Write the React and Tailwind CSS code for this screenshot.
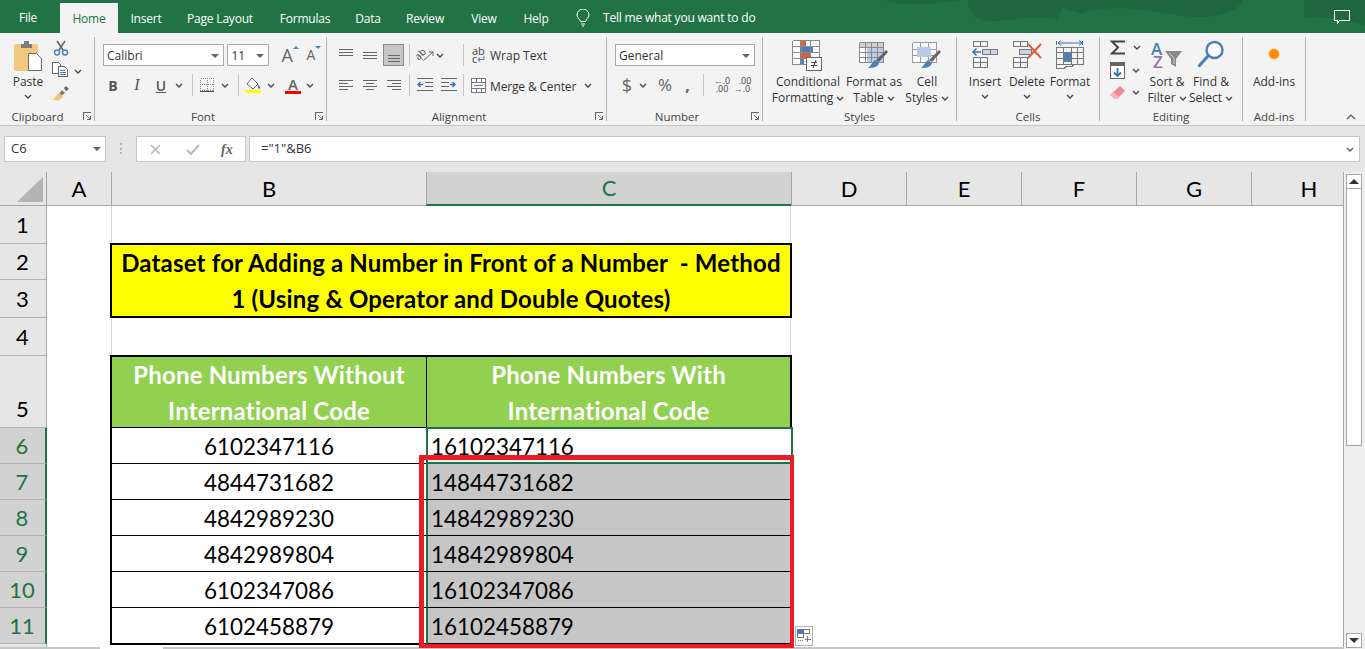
import { Fragment } from 'react'

const tabs = [
  { name: 'File', cls: 'w-[56px]', text: 'top-[1px]' },
  { name: 'Home', cls: 'w-[58px] ml-[4px] mt-[3px] h-[30px] bg-[#f3f3f3] text-[#217346]', text: '-top-[1px]' },
  { name: 'Insert', cls: 'w-[56px]', text: 'top-[2px]' },
  { name: 'Page Layout', cls: 'w-[92px]', text: 'top-[2px]' },
  { name: 'Formulas', cls: 'w-[78px]', text: 'top-[2px]' },
  { name: 'Data', cls: 'w-[48px]', text: 'top-[2px]' },
  { name: 'Review', cls: 'w-[66px]', text: 'top-[2px]' },
  { name: 'View', cls: 'w-[52px]', text: 'top-[2px]' },
  { name: 'Help', cls: 'w-[52px]', text: 'top-[2px]' },
]

const columns = [
  { name: 'A', cls: 'col-start-2' },
  { name: 'B', cls: 'col-start-3 border-l' },
  { name: 'C', cls: 'col-start-4 border-l', active: true },
  { name: 'D', cls: 'col-start-5 border-l' },
  { name: 'E', cls: 'col-start-6 border-l' },
  { name: 'F', cls: 'col-start-7 border-l' },
  { name: 'G', cls: 'col-start-8 border-l' },
  { name: 'H', cls: 'col-start-9 border-l pl-[23px]' },
]

const rowHeaders = [
  { n: '1', cls: 'row-start-2' },
  { n: '2', cls: 'row-start-3' },
  { n: '3', cls: 'row-start-4' },
  { n: '4', cls: 'row-start-5' },
  { n: '5', cls: 'row-start-6 items-end' },
  { n: '6', cls: 'row-start-7', active: true },
  { n: '7', cls: 'row-start-8', active: true },
  { n: '8', cls: 'row-start-9', active: true },
  { n: '9', cls: 'row-start-10', active: true },
  { n: '10', cls: 'row-start-11', active: true },
  { n: '11', cls: 'row-start-12', active: true },
]

const phones = [
  { row: 'row-start-8', b: '4844731682', c: '14844731682' },
  { row: 'row-start-9', b: '4842989230', c: '14842989230' },
  { row: 'row-start-10', b: '4842989804', c: '14842989804' },
  { row: 'row-start-11', b: '6102347086', c: '16102347086' },
  { row: 'row-start-12 border-b-2 -mb-px', b: '6102458879', c: '16102458879' },
]

function Chev({ className = '' }) {
  return (
    <svg className={`shrink-0 ${className}`} width="8" height="5" viewBox="0 0 8 5" fill="none" stroke="#444" strokeWidth="1.3">
      <path d="M1 1l3 3 3-3" />
    </svg>
  )
}

function Launcher() {
  return (
    <svg className="absolute right-[2px] bottom-[0px]" width="9" height="9" viewBox="0 0 9 9" fill="none" stroke="#666" shapeRendering="crispEdges">
      <path d="M0.5 8V0.5H8" />
      <path d="M3 3l4 4M7.5 4v3.5H4" shapeRendering="auto" />
    </svg>
  )
}

function Group({ label, className, labelClass = '', children, launcher }) {
  return (
    <div className={`relative flex h-[84px] shrink-0 flex-col border-r border-[#b1b1b1] ${className}`}>
      <div className="h-[73px] shrink-0">{children}</div>
      <div className={`shrink-0 text-center text-[11.5px] leading-[14px] text-[#444] ${labelClass}`}>{label}</div>
      {launcher && <Launcher />}
    </div>
  )
}

function Lines({ rows }) {
  return (
    <svg width="16" height="14" viewBox="0 0 16 14" stroke="#666" shapeRendering="crispEdges">
      {rows.map(([x1, x2, y]) => <line key={y} x1={x1} x2={x2} y1={y} y2={y} />)}
    </svg>
  )
}

function ComboArrow() {
  return <span className="ml-auto mr-[4px] h-0 w-0 border-x-[4px] border-t-[4px] border-x-transparent border-t-[#666]" />
}

function BigButton({ className, icon, lines, chev }) {
  return (
    <div className={`flex shrink-0 flex-col items-center pt-[3px] text-[12px] leading-[16px] text-[#333] ${className}`}>
      <div className="flex h-[34px] items-start">{icon}</div>
      {lines.map((l, i) => (
        <div key={l} className="flex items-center gap-[3px] whitespace-nowrap">
          {l}
          {chev && i === lines.length - 1 && <Chev />}
        </div>
      ))}
    </div>
  )
}

function GridLines({ x, y, w, h, cols, rows, color = '#8a8a8a' }) {
  const v = []
  const hz = []
  for (let i = 0; i <= cols; i++) v.push(x + (w * i) / cols)
  for (let i = 0; i <= rows; i++) hz.push(y + (h * i) / rows)
  return (
    <g stroke={color} shapeRendering="crispEdges">
      {v.map((a) => <line key={`v${a}`} x1={a} x2={a} y1={y} y2={y + h} />)}
      {hz.map((a) => <line key={`h${a}`} x1={x} x2={x + w} y1={a} y2={a} />)}
    </g>
  )
}

function Brush() {
  return (
    <g>
      <path d="M28 10l2 2-9 10-3-2z" fill="#666" />
      <path d="M17 20l4 3c-1 4-5 5-11 5 3-2 4-6 7-8z" fill="#4a7fba" />
    </g>
  )
}

const icons = {
  paste: (
    <svg width="30" height="32" viewBox="0 0 30 32">
      <rect x="1" y="4" width="24" height="27" rx="2" fill="#f0c97e" />
      <path d="M8 4h3V1h5v3h3v4H8z" fill="#7d7d7d" />
      <path d="M15.500 13.500h8l5 5v12h-13z" fill="#fff" stroke="#6b6b6b" />
    </svg>
  ),
  cut: (
    <svg width="16" height="16" viewBox="0 0 16 16" fill="none">
      <path d="M4 1l6 9M12 1L6 10" stroke="#666" strokeWidth="1.6" />
      <circle cx="4" cy="12.500" r="2.500" stroke="#4a7fba" strokeWidth="1.4" />
      <circle cx="12" cy="12.500" r="2.500" stroke="#4a7fba" strokeWidth="1.4" />
    </svg>
  ),
  copy: (
    <svg width="16" height="15" viewBox="0 0 16 15" fill="#fff" stroke="#666" shapeRendering="crispEdges">
      <path d="M0.500 0.500h6l2 2v9h-8z" />
      <path d="M6.500 4.500h6l3 3v7h-9z" />
      <path d="M8 8.500h5M8 10.500h6M8 12.500h6" stroke="#4a7fba" />
    </svg>
  ),
  painter: (
    <svg width="17" height="15" viewBox="0 0 17 15">
      <path d="M10 4l3 3-4 3-2-2z" fill="#777" />
      <path d="M12 2l2-2 3 3-3 2z" fill="#666" />
      <path d="M7 6l4 5-5 4-6-2c3-1 5-4 7-7z" fill="#edc37a" />
    </svg>
  ),
  borders: (
    <svg width="14" height="14" viewBox="0 0 14 14" fill="none" stroke="#888" strokeDasharray="1 1" shapeRendering="crispEdges">
      <rect x="0.500" y="0.500" width="13" height="12" />
      <path d="M7.500 0v13M0 6.500h14" />
      <path d="M0 13.500h14" stroke="#555" strokeDasharray="none" />
    </svg>
  ),
  fill: (
    <svg width="17" height="16" viewBox="0 0 17 16">
      <path d="M7 1l6 6-5 5-6-5z" fill="#fff" stroke="#666" />
      <path d="M13 7c1 2 3 3 2 4.500-1 1-3 0-2-4.500z" fill="#4a7fba" />
      <rect x="0" y="13" width="16" height="3" fill="#ffff00" />
    </svg>
  ),
  color: (
    <div className="relative flex h-[17px] w-[16px] flex-col items-center">
      <span className="text-[15px] font-semibold leading-[14px] text-[#666]">A</span>
      <span className="h-[4px] w-[16px] bg-[#ff0000]" />
    </div>
  ),
  orient: (
    <svg className="overflow-visible" width="22" height="18" viewBox="0 0 22 18" fill="none" stroke="#666">
      <text x="1" y="12" fontSize="10" fill="#444" stroke="none" fontFamily="Open Sans" transform="rotate(-45 6 9)">ab</text>
      <path d="M9 15l10-9M19 6h-4M19 6v4" />
      <path d="M3 8l7 7" stroke="#888" />
    </svg>
  ),
  wrap: (
    <div className="relative h-[16px] w-[13px] text-[11px] leading-[8px] text-[#444]">
      <div>ab</div>
      <div>c<span className="text-[#4a7fba]">↵</span></div>
    </div>
  ),
  merge: (
    <svg width="15" height="15" viewBox="0 0 15 15" fill="#fff" stroke="#777" shapeRendering="crispEdges">
      <rect x="0.500" y="0.500" width="14" height="14" />
      <path d="M0 4.500h15M0 10.500h15M5 0v4M10 0v4M5 11v4M10 11v4" fill="none" />
      <path d="M3 7.500h9" stroke="#4a7fba" fill="none" />
    </svg>
  ),
  indentDec: (
    <svg width="16" height="14" viewBox="0 0 16 14" fill="none" stroke="#666" shapeRendering="crispEdges">
      <path d="M0 .500h16M8 4.500h8M8 8.500h8M0 12.500h16" />
      <path d="M6 6.500H1M3.500 4l-2.500 2.500 2.500 2.500" stroke="#2f75b5" shapeRendering="auto" strokeWidth="1.400" />
    </svg>
  ),
  indentInc: (
    <svg width="16" height="14" viewBox="0 0 16 14" fill="none" stroke="#666" shapeRendering="crispEdges">
      <path d="M0 .500h16M0 4.500h8M0 8.500h8M0 12.500h16" />
      <path d="M9 6.500h5M11.500 4l2.500 2.500-2.500 2.500" stroke="#2f75b5" shapeRendering="auto" strokeWidth="1.400" />
    </svg>
  ),
  cond: (
    <svg width="32" height="32" viewBox="0 0 32 32">
      <rect x="0.500" y="0.500" width="27" height="24" fill="#fff" />
      <rect x="8" y="1" width="6" height="6" fill="#d9603c" />
      <rect x="8" y="7" width="13" height="6" fill="#4a7fba" />
      <rect x="8" y="13" width="10" height="6" fill="#d9603c" />
      <rect x="8" y="19" width="4" height="6" fill="#4a7fba" />
      <GridLines x={0.5} y={0.5} w={27} h={24} cols={3} rows={4} color="#8a8a8a" />
      <rect x="14.500" y="17.500" width="15" height="13" fill="#fff" stroke="#666" shapeRendering="crispEdges" />
      <path d="M19 22.500h6M19 25.500h6M24 20l-3 8" fill="none" stroke="#444" />
    </svg>
  ),
  table: (
    <svg width="32" height="32" viewBox="0 0 32 32">
      <rect x="1" y="2" width="24" height="20" fill="#fff" />
      <rect x="9" y="7" width="16" height="15" fill="#b9cce4" />
      <rect x="1" y="2" width="24" height="5" fill="#cfcfcf" />
      <GridLines x={1.5} y={2.5} w={24} h={20} cols={4} rows={4} />
      <Brush />
    </svg>
  ),
  styles: (
    <svg width="32" height="32" viewBox="0 0 32 32">
      <rect x="1" y="2" width="24" height="20" fill="#fff" />
      <GridLines x={1.5} y={2.5} w={24} h={20} cols={3} rows={3} color="#999" />
      <rect x="6" y="7" width="14" height="10" fill="#b9cce4" />
      <Brush />
    </svg>
  ),
  insert: (
    <svg width="28" height="28" viewBox="0 0 28 28" fill="none" stroke="#777" shapeRendering="crispEdges">
      <path d="M2.500 1.500h14v5h-14zM9.500 1.500v5" />
      <path d="M2.500 17.500h14v10h-14zM9.500 17.500v10M2.500 22.500h14" />
      <path d="M11.500 9.500h15v5h-15zM19 9.500v5" fill="#c5d6e8" />
      <path d="M10 12H2M5.500 8.500L2 12l3.500 3.500" stroke="#2f75b5" strokeWidth="1.500" shapeRendering="auto" />
    </svg>
  ),
  del: (
    <svg width="30" height="28" viewBox="0 0 30 28" fill="none" stroke="#777" shapeRendering="crispEdges">
      <path d="M1.500 1.500h14v5h-14zM8.500 1.500v5" />
      <path d="M1.500 17.500h14v10h-14zM8.500 17.500v10M1.500 22.500h14" />
      <path d="M7.500 9.500h12v5h-12z" fill="#c5d6e8" />
      <path d="M16 4l13 14M29 4L16 18" stroke="#d9603c" strokeWidth="2" shapeRendering="auto" />
    </svg>
  ),
  format: (
    <svg width="30" height="32" viewBox="0 0 30 32" fill="none" stroke="#777" shapeRendering="crispEdges">
      <path d="M1.500 1v4M27.500 1v4" stroke="#2f75b5" />
      <path d="M3 3h24M6 .500L3 3l3 2.500M24 .500L27 3l-3 2.500" stroke="#2f75b5" shapeRendering="auto" />
      <rect x="8.500" y="12" width="8" height="10" fill="#4a7fba" stroke="none" />
      <path d="M1.500 7.500h27v17h-27zM8.500 7.500v17M16.500 7.500v17M22.500 7.500v17M1.500 12.500h27M1.500 18.500h27" />
      <path d="M1.500 24.500v4h8l1-2h7l1-2" />
    </svg>
  ),
  sigma: (
    <svg width="16" height="15" viewBox="0 0 16 15" fill="none" stroke="#444" strokeWidth="2">
      <path d="M15 1.500H2l6 6-6 6h13" />
    </svg>
  ),
  down: (
    <svg width="15" height="17" viewBox="0 0 15 17" shapeRendering="crispEdges">
      <rect x="0.500" y="0.500" width="14" height="16" fill="#fff" stroke="#666" />
      <rect x="0" y="0" width="15" height="4" fill="#666" />
      <path d="M7.500 6v8M4 10.500l3.500 3.500 3.500-3.500" fill="none" stroke="#2f75b5" strokeWidth="1.800" shapeRendering="auto" />
    </svg>
  ),
  eraser: (
    <svg width="15" height="14" viewBox="0 0 15 14">
      <path d="M10 0l5 5-7 7-3 1-5-4z" fill="#e98a9a" />
      <path d="M0 9l3-3 6 5-2 2-2 0z" fill="#f3b5bf" />
    </svg>
  ),
  sort: (
    <svg className="overflow-visible" width="32" height="30" viewBox="0 0 32 30">
      <text x="0" y="15" fontSize="17" fontWeight="600" fill="#4a7fba" fontFamily="Open Sans">A</text>
      <text x="2" y="28" fontSize="17" fontWeight="600" fill="#9a6fb8" fontFamily="Open Sans">Z</text>
      <path d="M14 11h17l-6 8v8l-5-3v-5z" fill="#8a8a8a" />
      <path d="M18 13l5 5v6" fill="none" stroke="#ccc" />
    </svg>
  ),
  find: (
    <svg width="28" height="28" viewBox="0 0 28 28" fill="none">
      <circle cx="17.500" cy="10" r="8" stroke="#4a7fba" strokeWidth="2.400" fill="#fff" />
      <path d="M11 16L2.500 25.500" stroke="#4a7fba" strokeWidth="3.200" strokeLinecap="round" />
    </svg>
  ),
  addin: <span className="mt-[9px] h-[10px] w-[10px] rounded-full bg-[#ff8c00] shadow-[0_0_3px_#ffc680]" />,
}

function Ribbon() {
  return (
    <div className="relative flex h-[93px] items-start border-b border-[#c6c6c6] bg-[#f3f3f3] pt-[4px]">
      <Group label="Clipboard" labelClass="pr-[19px]" launcher className="w-[95px]">
        <div className="flex">
          <div className="ml-[4px] flex w-[48px] flex-col items-center pt-[3px] text-[12px] leading-[16px] text-[#333]">
            <div className="h-[34px]">{icons.paste}</div>
            <div>Paste</div>
            <Chev className="mt-[4px]" />
          </div>
          <div className="flex w-[40px] flex-col pt-[3px]">
            <div className="flex h-[22px] pl-[1px]">{icons.cut}</div>
            <div className="flex h-[24px] items-start gap-[6px]">{icons.copy}<Chev className="mt-[7px]" /></div>
            <div className="flex">{icons.painter}</div>
          </div>
        </div>
      </Group>

      <Group label="Font" labelClass="pr-[15px]" launcher className="w-[232px]">
        <div className="mt-[7px] ml-[8px] flex h-[22px] items-center text-[12px] text-[#333]">
          <div className="flex h-[22px] w-[122px] items-center border border-[#ababab] bg-white pl-[3px] pt-[1px]">Calibri<ComboArrow /></div>
          <div className="ml-[3px] flex h-[22px] w-[42px] items-center border border-[#ababab] bg-white pl-[3px] pt-[1px]">11<ComboArrow /></div>
          <div className="ml-[9px] flex w-[24px] items-start justify-center text-[18px] leading-[22px] text-[#666]">A<span className="mt-[2px] h-0 w-0 border-x-[3px] border-b-[3px] border-x-transparent border-b-[#4a7fba]" /></div>
          <div className="flex w-[24px] items-start justify-center text-[14px] leading-[24px] text-[#666]">A<span className="mt-[3px] h-0 w-0 border-x-[3px] border-t-[3px] border-x-transparent border-t-[#4a7fba]" /></div>
        </div>
        <div className="mt-[8px] ml-[6px] flex h-[22px] items-center text-[#555]">
          <span className="w-[24px] text-center text-[14px] font-bold">B</span>
          <span className="w-[24px] text-center font-['Liberation_Serif',serif] text-[16px] italic">I</span>
          <span className="w-[24px] text-center text-[14px] font-semibold underline">U</span>
          <span className="flex w-[12px] justify-center"><Chev /></span>
          <span className="ml-[7px] h-[22px] w-px bg-[#c6c6c6]" />
          <span className="flex w-[28px] justify-center">{icons.borders}</span>
          <span className="flex w-[8px] justify-center"><Chev /></span>
          <span className="ml-[9px] h-[22px] w-px bg-[#c6c6c6]" />
          <span className="flex w-[28px] justify-center">{icons.fill}</span>
          <span className="flex w-[8px] justify-center"><Chev /></span>
          <span className="ml-[4px] flex w-[28px] justify-center">{icons.color}</span>
          <span className="-ml-px flex w-[8px] justify-center"><Chev /></span>
        </div>
      </Group>

      <Group label="Alignment" labelClass="pr-[15px]" launcher className="w-[280px]">
        <div className="mt-[7px] ml-[7px] flex h-[22px] items-center">
          <span className="flex w-[24px] justify-center"><Lines rows={[[1, 15, 1], [1, 15, 4], [1, 15, 7]]} /></span>
          <span className="flex w-[24px] justify-center"><Lines rows={[[1, 15, 4], [1, 15, 7], [1, 15, 10]]} /></span>
          <span className="ml-[1px] flex h-[22px] w-[21px] items-center justify-center border border-[#8a8a8a] bg-[#c6c6c6]"><Lines rows={[[2, 14, 7], [2, 14, 10], [2, 14, 13]]} /></span>
          <span className="ml-[5px] h-[22px] w-px bg-[#c6c6c6]" />
          <span className="flex w-[30px] justify-center">{icons.orient}</span>
          <span className="-ml-[4px] flex w-[8px] justify-center"><Chev /></span>
          <span className="ml-[19px] h-[22px] w-px bg-[#c6c6c6]" />
          <span className="ml-[8px] w-[13px]">{icons.wrap}</span>
          <span className="ml-[5px] whitespace-nowrap pt-[2px] text-[12px] text-[#333]">Wrap Text</span>
        </div>
        <div className="mt-[8px] ml-[7px] flex h-[22px] items-center">
          <span className="flex w-[24px] justify-center"><Lines rows={[[1, 15, 2], [1, 10, 5], [1, 15, 8], [1, 10, 11]]} /></span>
          <span className="flex w-[24px] justify-center"><Lines rows={[[1, 15, 2], [4, 12, 5], [1, 15, 8], [4, 12, 11]]} /></span>
          <span className="ml-[1px] flex w-[21px] justify-center"><Lines rows={[[1, 15, 2], [6, 15, 5], [1, 15, 8], [6, 15, 11]]} /></span>
          <span className="ml-[5px] h-[22px] w-px bg-[#c6c6c6]" />
          <span className="flex w-[30px] justify-center">{icons.indentDec}</span>
          <span className="-ml-[3px] flex w-[24px] justify-center">{icons.indentInc}</span>
          <span className="ml-[2px] h-[22px] w-px bg-[#c6c6c6]" />
          <span className="ml-[7px] w-[15px]">{icons.merge}</span>
          <span className="ml-[4px] w-[86px] whitespace-nowrap pt-[3px] text-[12px] tracking-[-0.15px] text-[#333]">Merge &amp; Center</span>
          <Chev className="ml-[8px]" />
        </div>
      </Group>

      <Group label="Number" labelClass="pr-[15px]" launcher className="w-[156px]">
        <div className="mt-[7px] ml-[8px] flex h-[22px] w-[140px] items-center border border-[#ababab] bg-white pl-[3px] pt-[1px] text-[12px] text-[#333]">General<ComboArrow /></div>
        <div className="mt-[8px] ml-[8px] flex h-[22px] items-center text-[#666]">
          <span className="w-[24px] text-center text-[18px]">$</span>
          <span className="flex w-[8px] justify-center"><Chev /></span>
          <span className="ml-[4px] w-[28px] text-center text-[17px]">%</span>
          <span className="w-[17px] text-center text-[16px] font-bold">,</span>
          <span className="ml-[7px] h-[22px] w-px bg-[#c6c6c6]" />
          <span className="ml-[2px] flex w-[24px] flex-col items-center text-[9px] leading-[8px] text-[#444]">
            <span className="pl-[8px]"><span className="text-[#2f75b5]">←</span>.0</span>
            <span className="pl-[8px]">.00</span>
          </span>
          <span className="flex w-[24px] flex-col items-center text-[9px] leading-[8px] text-[#444]">
            <span className="pl-[6px]">.00</span>
            <span><span className="text-[#2f75b5]">→</span>.0</span>
          </span>
        </div>
      </Group>

      <Group label="Styles" className="w-[194px]">
        <div className="flex pl-[8px]">
          <BigButton className="w-[74px]" icon={icons.cond} lines={['Conditional', 'Formatting']} chev />
          <BigButton className="w-[58px]" icon={icons.table} lines={['Format as', 'Table']} chev />
          <BigButton className="w-[48px]" icon={icons.styles} lines={['Cell', 'Styles']} chev />
        </div>
      </Group>

      <Group label="Cells" className="w-[143px]">
        <div className="flex pl-[5px]">
          {[
            ['Insert', icons.insert, 'w-[46px]'],
            ['Delete', icons.del, 'w-[38px]'],
            ['Format', icons.format, 'w-[48px]'],
          ].map(([name, icon, cls]) => (
            <div key={name} className={`flex shrink-0 flex-col items-center pt-[3px] text-[12px] leading-[16px] text-[#333] ${cls}`}>
              <div className="h-[34px]">{icon}</div>
              <div>{name}</div>
              <Chev className="mt-[4px]" />
            </div>
          ))}
        </div>
      </Group>

      <Group label="Editing" className="w-[143px]">
        <div className="flex pl-[10px]">
          <div className="flex w-[34px] flex-col pt-[3px]">
            <div className="flex h-[22px] items-start gap-[7px]">{icons.sigma}<Chev className="mt-[5px]" /></div>
            <div className="flex h-[24px] items-start gap-[7px]">{icons.down}<Chev className="mt-[6px]" /></div>
            <div className="flex items-start gap-[7px]">{icons.eraser}<Chev className="mt-[4px]" /></div>
          </div>
          <BigButton className="w-[46px]" icon={icons.sort} lines={['Sort &', 'Filter']} chev />
          <BigButton className="w-[42px]" icon={icons.find} lines={['Find &', 'Select']} chev />
        </div>
      </Group>

      <Group label="Add-ins" className="w-[63px]">
        <BigButton className="w-[62px]" icon={icons.addin} lines={['Add-ins']} />
      </Group>

      <svg className="absolute right-[9px] bottom-[5px]" width="10" height="6" viewBox="0 0 10 6" fill="none" stroke="#555" strokeWidth="1.200">
        <path d="M1 5l4-4 4 4" />
      </svg>
    </div>
  )
}

export default function App() {
  return (
    <div className="relative h-[649px] w-[1365px] overflow-hidden bg-[#e6e6e6] font-['Open_Sans',sans-serif]">
      {/* Title bar */}
      <div className="relative flex h-[33px] items-start bg-[#217346] text-[12px] leading-[33px] tracking-[-0.2px] text-white">
        <svg className="absolute left-0 top-0" width="1365" height="33" viewBox="0 0 1365 33" fill="#206640">
          <path d="M885 0c5 5 45 6 75 0z" />
          <path d="M968 5c4 9 7 15 22 16 20 1 40-7 68-2l4-11 20 6c18-9 58-6 88 0 30 6 65 4 73-14H968z" />
          <path d="M1304 0v18c16-3 41 2 61 7V0z" />
        </svg>
        {tabs.map((t) => (
          <div key={t.name} className={`relative shrink-0 text-center ${t.cls}`}>
            <span className={`relative ${t.text}`}>{t.name}</span>
          </div>
        ))}
        <svg className="relative ml-[14px] mt-[9px] shrink-0" width="14" height="18" viewBox="0 0 14 18" fill="none" stroke="#fff">
          <path d="M4.500 12.500C4 10 1 9 1 6a6 6 0 0112 0c0 3-3 4-3.500 6.500zM5 15h4M6 17h2" />
        </svg>
        <span className="relative ml-[13px] top-[1px] whitespace-nowrap">Tell me what you want to do</span>
        <svg className="absolute left-[1334px] top-[10px]" width="17" height="15" viewBox="0 0 17 15" fill="none" stroke="#fff" shapeRendering="crispEdges">
          <path d="M0.500 0.500h15v10H5.500l-2 3v-3h-3z" />
        </svg>
      </div>

      <Ribbon />

      {/* Formula bar */}
      <div className="flex h-[46px] items-start bg-[#e6e6e6] pt-[10px] text-[13px] text-[#333]">
        <div className="ml-[4px] flex h-[26px] w-[102px] items-center border border-[#c6c6c6] bg-white pl-[6px]">C6<ComboArrow /></div>
        <div className="ml-[14px] mt-[7px] flex h-[11px] w-[2px] flex-col justify-between">
          <span className="h-[2px] bg-[#b1b1b1]" /><span className="h-[2px] bg-[#b1b1b1]" /><span className="h-[2px] bg-[#b1b1b1]" />
        </div>
        <div className="ml-[14px] flex h-[26px] w-[110px] items-center border border-[#c6c6c6] bg-white">
          <svg className="ml-[13px]" width="11" height="11" viewBox="0 0 11 11" stroke="#b9b9b9" strokeWidth="1.600"><path d="M1 1l9 9M10 1l-9 9" /></svg>
          <svg className="ml-[25px]" width="14" height="11" viewBox="0 0 14 11" fill="none" stroke="#b9b9b9" strokeWidth="2"><path d="M1 6l4 4 8-9" /></svg>
          <span className="ml-[21px] font-['Liberation_Serif',serif] text-[14px] font-bold italic text-[#666]">fx</span>
        </div>
        <div className="ml-[3px] flex h-[26px] w-[1111px] items-center border border-[#c6c6c6] bg-white pl-[11px]">
          ="1"&amp;B6
          <svg className="ml-auto mr-[5px]" width="8" height="5" viewBox="0 0 8 5" fill="none" stroke="#666" strokeWidth="1.500"><path d="M1 1l3 3 3-3" /></svg>
        </div>
      </div>

      {/* Sheet */}
      <div className="flex h-[477px] items-start">
        <div className="grid w-[1344px] grid-cols-[47px_64px_315px_365px_115px_115px_115px_115px_92px] grid-rows-[34px_38px_36px_38px_38px_72px_36px_36px_36px_36px_36px_36px_3px] border-r border-[#a6a6a6] bg-white font-['Lato','Liberation_Sans',sans-serif] text-[22.4px] leading-[36px] text-black">
          <div className="relative col-start-1 row-start-1 border-r border-b border-[#a6a6a6] bg-[#e6e6e6]">
            <svg className="absolute left-[17px] top-[5px]" width="26" height="25" viewBox="0 0 26 25" fill="#b4b4b4"><path d="M26 0v25H0z" /></svg>
          </div>
          {columns.map((c) => (
            <div
              key={c.name}
              className={`row-start-1 flex items-center justify-center text-[22px] ${c.cls} ${
                c.active ? 'border-b-2 border-b-[#217346] border-l-[#a6a6a6] bg-[#d2d2d2] text-[#217346]' : 'border-b border-[#a6a6a6] bg-[#e6e6e6]'
              }`}
            >
              {c.name}
            </div>
          ))}
          {rowHeaders.map((r) => (
            <div
              key={r.n}
              className={`col-start-1 flex justify-center border-b border-[#b1b1b1] pr-[1px] text-[22px] ${r.cls} ${
                r.active ? 'border-r-2 border-r-[#217346] bg-[#d2d2d2] text-[#217346]' : 'items-center border-r border-r-[#a6a6a6] bg-[#e6e6e6]'
              }`}
            >
              {r.n}
            </div>
          ))}
          <div className="col-start-1 row-start-13 border-r border-[#a6a6a6] bg-[#e6e6e6]" />

          {/* side borders of B and C in the blank rows */}
          <div className="col-start-3 row-start-2 border-l border-[#d4d4d4]" />
          <div className="col-start-4 row-start-2 border-r border-[#d4d4d4]" />
          <div className="col-start-3 row-start-5 border-l border-[#d4d4d4]" />
          <div className="col-start-4 row-start-5 border-r border-[#d4d4d4]" />

          <div className="col-span-2 col-start-3 row-span-2 row-start-3 -ml-px -mt-px -mr-px flex flex-col items-center justify-center whitespace-pre border-2 border-black bg-[#ffff00] text-[24px] font-bold tracking-[0.18px]">
            <div>Dataset for Adding a Number in Front of a Number  - Method</div>
            <div>1 (Using &amp; Operator and Double Quotes)</div>
          </div>

          <div className="col-start-3 row-start-6 -ml-px -mt-px border-2 border-b border-r-0 border-black bg-[#92d050] text-center text-[24px] font-bold tracking-[0.18px] text-white">
            Phone Numbers Without<br />International Code
          </div>
          <div className="col-start-4 row-start-6 -mt-px -mr-px border-2 border-b border-l border-black bg-[#92d050] text-center text-[24px] font-bold tracking-[0.18px] text-white">
            Phone Numbers With<br />International Code
          </div>

          <div className="col-start-3 row-start-7 -ml-px border-b border-l-2 border-black pt-px text-center">6102347116</div>
          <div className="z-[1] col-start-4 row-start-7 -mr-[2px] -mt-px border-2 border-[#217346] bg-white pl-[3px]">16102347116</div>

          {phones.map((p) => (
            <Fragment key={p.b}>
              <div className={`col-start-3 -ml-px border-b border-l-2 border-black pt-px text-center ${p.row}`}>{p.b}</div>
              <div className={`col-start-4 border-b border-l-2 border-black border-l-[#217346] bg-[#c6c6c6] pl-[3px] pt-px ${p.row}`}>{p.c}</div>
            </Fragment>
          ))}
        </div>

        {/* Vertical scrollbar */}
        <div className="flex h-[477px] w-[21px] flex-col items-center bg-[#efefef] pr-[2px] pt-[2px]">
          <div className="flex h-[15px] w-[16px] items-center justify-center border border-[#a6a6a6] bg-white">
            <span className="h-0 w-0 border-x-[5px] border-b-[5px] border-x-transparent border-b-[#333]" />
          </div>
          <div className="h-[257px] w-[16px] border-x border-b border-[#a6a6a6] bg-white" />
          <div className="mt-auto mb-[1px] flex h-[15px] w-[16px] items-center justify-center border border-[#a6a6a6] bg-white">
            <span className="h-0 w-0 border-x-[5px] border-t-[5px] border-x-transparent border-t-[#333]" />
          </div>
        </div>
      </div>

      {/* Sheet tab strip */}
      <div className="absolute bottom-0 left-0 flex h-[2px] w-[1344px] bg-[#c6c6c6]">
        <span className="ml-[100px] w-[63px] bg-white" />
      </div>

      {/* Annotation over the selected range */}
      <div className="absolute left-[419px] top-[455px] z-10 h-[193px] w-[375px] border-4 border-l-[5px] border-t-[5px] border-[#ed1c24]" />

      {/* Quick analysis tag */}
      <div className="absolute left-[795px] top-[626px] z-10 flex h-[20px] w-[18px] items-center justify-center border border-[#b1b1b1] bg-white">
        <svg width="14" height="14" viewBox="0 0 14 14" fill="none" stroke="#777" shapeRendering="crispEdges">
          <rect x="0" y="0" width="6" height="4" fill="#3b78e7" stroke="none" />
          <path d="M6.500 .500h6v4h-6zM.500 4.500h6v4h-6z" />
          <path d="M.500 11.500h6" strokeDasharray="1 1" />
          <path d="M10.500 7v6M8 10.500h6" />
        </svg>
      </div>
    </div>
  )
}
